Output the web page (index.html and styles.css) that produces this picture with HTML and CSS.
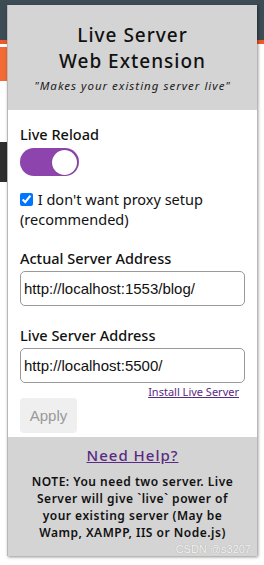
FILE: index.html
```html
<!DOCTYPE html>
<html lang="en">

<head>
  <meta charset="UTF-8">
  <meta name="viewport" content="width=device-width, initial-scale=1.0">
  <title>Live Server Web Extension</title>
  <link rel="stylesheet" href="styles.css">
</head>

<body>
  <div class="page-bg">
    <div class="bg-top"></div>
    <div class="bg-orange"></div>
    <div class="bg-badge"></div>
    <div class="bg-dark"></div>
  </div>

  <div class="popup">
    <header class="popup-header">
      <h1 class="title">Live Server<br>Web Extension</h1>
      <p class="tagline">"Makes your existing server live"</p>
    </header>

    <main class="popup-body">
      <div class="field">
        <span class="label">Live Reload</span>
        <label class="switch">
          <input type="checkbox" checked>
          <span class="slider"></span>
        </label>
      </div>

      <label class="proxy">
        <input type="checkbox" checked>
        I don't want proxy setup (recommended)
      </label>

      <div class="field">
        <span class="label">Actual Server Address</span>
        <input class="address" type="text" value="http://localhost:1553/blog/">
      </div>

      <div class="field">
        <span class="label">Live Server Address</span>
        <input class="address" type="text" value="http://localhost:5500/">
        <a class="install-link" href="#">Install Live Server</a>
      </div>

      <button class="apply" disabled>Apply</button>
    </main>

    <footer class="popup-footer">
      <a class="help-link" href="#">Need Help?</a>
      <p class="note">NOTE: You need two server. Live Server will give `live` power of your existing server (May be Wamp, XAMPP, IIS or Node.js)</p>
      <span class="watermark">CSDN @s3207</span>
    </footer>
  </div>
</body>

</html>
```

FILE: styles.css
```css
* {
  box-sizing: border-box;
  margin: 0;
  padding: 0;
}

body {
  font-family: 'Noto Sans', 'Open Sans', sans-serif;
  background-color: #fff;
  position: relative;
  width: 264px;
  height: 565px;
  overflow: hidden;
  padding: 5px 0 0 7px;
}

/* Browser page behind the popup */
.page-bg {
  position: absolute;
  inset: 0;
  z-index: 0;
}

.bg-top {
  height: 40px;
  background-color: #3d4b55;
}

.bg-orange {
  height: 4px;
  background-color: #f0592a;
}

.bg-badge {
  position: absolute;
  left: 0;
  top: 47px;
  width: 7px;
  height: 34px;
  background-color: #f26a35;
}

.bg-dark {
  position: absolute;
  left: 0;
  top: 142px;
  width: 7px;
  height: 40px;
  background-color: #2f2f2f;
}

.popup {
  position: relative;
  z-index: 1;
  width: 250px;
  height: 551px;
  display: flex;
  flex-direction: column;
  background-color: #fff;
  box-shadow: 1px 1px 3px rgba(0, 0, 0, 0.45);
  border-left: 1px solid #b8b8b8;
}

.popup-header {
  background-color: #d4d4d4;
  height: 105px;
  text-align: center;
  padding-top: 17px;
}

.title {
  font-size: 19px;
  font-weight: 500;
  line-height: 26px;
  letter-spacing: 1px;
  color: #111;
}

.tagline {
  font-size: 11.5px;
  font-style: italic;
  letter-spacing: 1px;
  color: #222;
  margin-top: 4px;
}

.popup-body {
  flex: 1;
  padding: 14px 12px 0 12px;
  display: flex;
  flex-direction: column;
}

.field {
  display: flex;
  flex-direction: column;
}

.label {
  font-size: 14.5px;
  font-weight: 500;
  color: #111;
  line-height: 20px;
}

.switch {
  position: relative;
  display: block;
  width: 59px;
  height: 28px;
  margin-top: 4px;
}

.switch input {
  display: none;
}

.slider {
  position: absolute;
  inset: 0;
  background-color: #8e44ad;
  border-radius: 14px;
}

.slider::before {
  content: '';
  position: absolute;
  width: 25px;
  height: 25px;
  right: 2px;
  top: 1.5px;
  background-color: #fff;
  border-radius: 50%;
  box-shadow: 0 0 1px rgba(0, 0, 0, 0.4);
}

.proxy {
  display: block;
  margin-top: 13px;
  font-size: 14.5px;
  line-height: 20px;
  color: #111;
}

.proxy input {
  width: 13px;
  height: 13px;
  margin: 0 1px 0 0;
  vertical-align: -1px;
  accent-color: #0075ff;
}

.proxy + .field {
  margin-top: 19px;
}

.field + .field {
  margin-top: 19px;
}

.address {
  margin-top: 3px;
  height: 35px;
  width: 225px;
  border: 1px solid #999;
  border-radius: 5px;
  padding: 0 3px;
  font-family: 'Liberation Sans', Arial, sans-serif;
  font-size: 15px;
  color: #111;
  outline: none;
}

.install-link {
  align-self: flex-end;
  margin: 2px 6px 0 0;
  font-size: 11px;
  color: #5a2a82;
  line-height: 13px;
}

.apply {
  margin-top: 0;
  width: 57px;
  height: 35px;
  border: none;
  border-radius: 4px;
  background-color: #efefef;
  color: #999;
  font-family: 'Liberation Sans', Arial, sans-serif;
  font-size: 15px;
}

.popup-footer {
  position: relative;
  background-color: #d4d4d4;
  height: 119px;
  text-align: center;
  padding-top: 7px;
}

.help-link {
  font-size: 15px;
  font-weight: 500;
  letter-spacing: 1px;
  color: #5a2a82;
}

.note {
  margin: 7px 14px 0;
  font-size: 12px;
  font-weight: 600;
  letter-spacing: 0.5px;
  line-height: 17px;
  color: #111;
}

.watermark {
  position: absolute;
  right: 6px;
  bottom: 0;
  font-family: 'Liberation Sans', Arial, sans-serif;
  font-size: 11px;
  line-height: 13px;
  color: #f4f4f4;
  text-shadow: 0 0 1px #999;
}
```
